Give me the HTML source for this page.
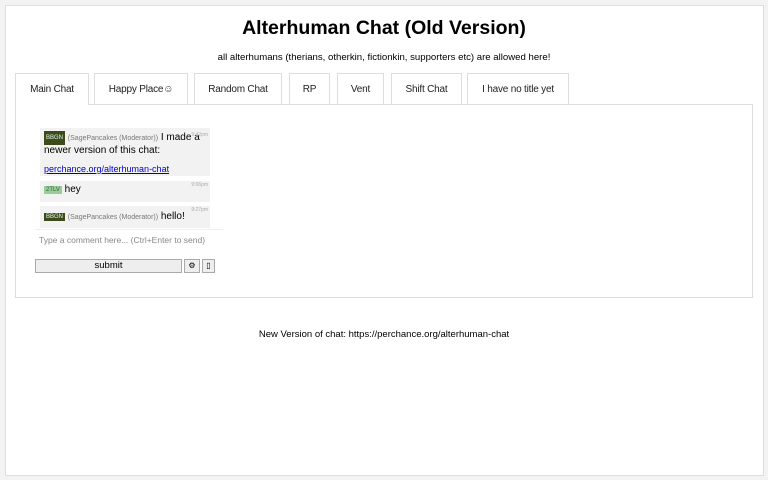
<!DOCTYPE html>
<html><head><style>
body{margin:0;background:#f3f3f3;font-family:"Liberation Sans",sans-serif;width:768px;height:480px;overflow:hidden;position:relative}
.page{position:absolute;left:5px;top:5px;width:757px;height:469px;background:#fff;border:1px solid #ddd}
.abs{position:absolute}
h1{position:absolute;left:0;width:768px;top:17px;margin:0;text-align:center;font-size:19.5px;font-weight:bold;color:#000}
.sub{left:0;width:768px;top:52px;text-align:center;font-size:9.6px}
.tab{position:absolute;top:73px;height:31px;border:1px solid #ddd;border-bottom:none;background:#fff;font-size:10px;line-height:31px;text-align:center;box-sizing:border-box;color:#222;letter-spacing:-0.2px}
.panel{left:15px;top:104px;width:738px;height:194px;border:1px solid #ddd;box-sizing:border-box}
.msg{position:absolute;left:40px;width:170px;background:#f2f2f2;font-size:10px;color:#000;box-sizing:border-box;padding:3px 4px}
.tag{display:inline-block;font-size:6px;padding:1px 2px;color:#dfe;vertical-align:1px}
.n{font-size:7px;color:#777}
.t{position:absolute;right:2px;top:1px;font-size:5px;color:#aaa}
</style></head><body>
<div class="page"></div>
<h1>Alterhuman Chat (Old Version)</h1>
<div class="abs sub">all alterhumans (therians, otherkin, fictionkin, supporters etc) are allowed here!</div>
<div class="abs panel"></div>
<div class="tab" style="left:15px;width:74px;height:32px">Main Chat</div>
<div class="tab" style="left:94px;width:94px">Happy Place☺</div>
<div class="tab" style="left:194px;width:88px">Random Chat</div>
<div class="tab" style="left:289px;width:41px">RP</div>
<div class="tab" style="left:337px;width:47px">Vent</div>
<div class="tab" style="left:391px;width:71px">Shift Chat</div>
<div class="tab" style="left:467px;width:102px">I have no title yet</div>
<div class="msg" style="top:128px;height:48px;line-height:12px"><span class="t">9:42pm</span><span class="tag" style="background:#3d4a1c">BBGN</span> <span class="n">(SagePancakes (Moderator))</span> I made a newer version of this chat:<br><div style="margin-top:6px"><a style="color:#00c;font-size:9px" href="#">perchance.org/alterhuman-chat</a></div></div>
<div class="msg" style="top:181px;height:21px"><span class="t">9:06pm</span><span class="tag" style="background:#9c9;color:#363">2TLV</span> hey</div>
<div class="msg" style="top:206px;height:22px;padding-top:5px"><span class="t">9:27pm</span><span class="tag" style="background:#3d4a1c">BBGN</span> <span class="n">(SagePancakes (Moderator))</span> hello!</div>
<div class="abs" style="left:35px;top:229px;width:180px;border-top:1px solid #eee;font-size:8.5px;color:#888;padding:5px 4px;white-space:nowrap">Type a comment here... (Ctrl+Enter to send)</div>
<div class="abs" style="left:35px;top:259px;width:147px;height:14px;background:#eee;border:1px solid #aaa;box-sizing:border-box;font-size:9.5px;text-align:center;line-height:12px">submit</div>
<div class="abs" style="left:184px;top:259px;width:16px;height:14px;background:#eee;border:1px solid #aaa;box-sizing:border-box;font-size:8px;text-align:center;line-height:12px">⚙</div>
<div class="abs" style="left:202px;top:259px;width:13px;height:14px;background:#eee;border:1px solid #aaa;box-sizing:border-box;font-size:8px;text-align:center;line-height:12px">▯</div>
<div class="abs" style="left:0;width:768px;top:329px;text-align:center;font-size:9.5px">New Version of chat: https://perchance.org/alterhuman-chat</div>
</body></html>
